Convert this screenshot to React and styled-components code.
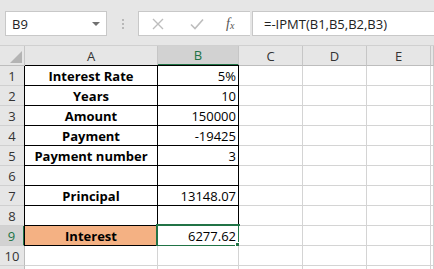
import styled, { createGlobalStyle } from "styled-components";

const Global = createGlobalStyle`
  html, body {
    margin: 0;
    padding: 0;
    background: #ffffff;
    overflow: hidden;
  }
  body {
    font-family: "Open Sans", "Liberation Sans", sans-serif;
  }
`;

const columns = ["A", "B", "C", "D", "E"];

const rows = [
  { label: "Interest Rate", value: "5%" },
  { label: "Years", value: "10" },
  { label: "Amount", value: "150000" },
  { label: "Payment", value: "-19425" },
  { label: "Payment number", value: "3" },
  { label: "", value: "" },
  { label: "Principal", value: "13148.07" },
  { label: "", value: "" },
  { label: "Interest", value: "6277.62", fill: true, selected: true },
];

export default function App() {
  const allRows = [...rows, null, null];

  return (
    <Page>
      <Global />
      <Toolbar>
        <NameBox>
          <span>B9</span>
          <Caret />
        </NameBox>
        <Grip>
          <i />
          <i />
          <i />
        </Grip>
        <ActionBox>
          <svg width="12" height="12" viewBox="0 0 12 12">
            <path d="M1 1 L11 11 M11 1 L1 11" stroke="#bdbdbd" strokeWidth="1.4" />
          </svg>
          <svg width="14" height="12" viewBox="0 0 14 12">
            <path d="M1 6.5 L5 10.5 L13 1.5" stroke="#bdbdbd" strokeWidth="1.6" fill="none" />
          </svg>
          <Fx>
            f<sub>x</sub>
          </Fx>
        </ActionBox>
        <FormulaBox>=-IPMT(B1,B5,B2,B3)</FormulaBox>
      </Toolbar>

      <Sheet>
        <Corner>
          <svg width="12" height="12" viewBox="0 0 12 12">
            <path d="M12 0 L12 12 L0 12 Z" fill="#b4b4b4" />
          </svg>
        </Corner>
        {columns.map((c) => (
          <ColHead key={c} active={c === "B"}>
            {c}
          </ColHead>
        ))}
        <ColHead />

        {allRows.map((r, i) => (
          <Row key={i}>
            {/* the 11th row only peeks in at the bottom edge, its number is hidden */}
            <RowHead active={r && r.selected}>{i < 10 ? i + 1 : ""}</RowHead>
            <Cell boxed={!!r} first={i === 0} left={!!r} fill={r && r.fill}>
              <Label>{r ? r.label : ""}</Label>
            </Cell>
            <Cell boxed={!!r} first={i === 0}>
              <Value>{r ? r.value : ""}</Value>
              {r && r.selected && <Selection />}
            </Cell>
            <Cell />
            <Cell />
            <Cell />
            <Cell />
          </Row>
        ))}
      </Sheet>
    </Page>
  );
}

const Page = styled.div`
  width: 434px;
  height: 269px;
  overflow: hidden;
  background: #ffffff;
`;

const Toolbar = styled.div`
  height: 46px;
  box-sizing: border-box;
  background: #e6e6e6;
  display: flex;
  align-items: center;
  padding: 10px 0 8px 5px;
  border-bottom: 1px solid #d0d0d0;
`;

const NameBox = styled.div`
  box-sizing: border-box;
  width: 102px;
  height: 25px;
  background: #ffffff;
  border: 1px solid #c8c8c8;
  display: flex;
  align-items: center;
  justify-content: space-between;
  padding: 0 6px 0 6px;
  font-size: 13px;
  color: #222;
`;

const Caret = styled.div`
  width: 0;
  height: 0;
  border-left: 4px solid transparent;
  border-right: 4px solid transparent;
  border-top: 4px solid #707070;
`;

const Grip = styled.div`
  width: 31px;
  display: flex;
  flex-direction: column;
  align-items: center;
  gap: 2px;

  i {
    width: 2px;
    height: 2px;
    background: #a8a8a8;
    border-radius: 1px;
  }
`;

const ActionBox = styled.div`
  box-sizing: border-box;
  width: 112px;
  height: 25px;
  background: #ffffff;
  border: 1px solid #c8c8c8;
  border-right: none;
  display: flex;
  align-items: center;
  padding-left: 13px;
  gap: 26px;
`;

const Fx = styled.span`
  font-family: "Liberation Serif", serif;
  font-style: italic;
  font-size: 14px;
  color: #555;
  margin-left: -4px;

  sub {
    font-size: 10px;
    vertical-align: -1px;
  }
`;

const FormulaBox = styled.div`
  box-sizing: border-box;
  flex: 1;
  height: 25px;
  margin-left: 2px;
  background: #ffffff;
  border: 1px solid #c8c8c8;
  border-right: none;
  display: flex;
  align-items: center;
  padding-left: 11px;
  font-size: 13px;
  color: #222;
`;

const Sheet = styled.div`
  display: grid;
  grid-template-columns: 25px 133px 81px 64px 64px 64px 1fr;
  grid-auto-rows: 20px;
  font-size: 13px;
`;

const Row = styled.div`
  display: contents;
`;

const Corner = styled.div`
  box-sizing: border-box;
  background: #e6e6e6;
  border-right: 1px solid #c6c6c6;
  border-bottom: 1px solid #bdbdbd;
  display: flex;
  align-items: flex-end;
  justify-content: flex-end;
  padding: 0 2px 2px 0;
`;

const ColHead = styled.div`
  box-sizing: border-box;
  background: ${(p) => (p.active ? "#d2d2d2" : "#e6e6e6")};
  color: ${(p) => (p.active ? "#217346" : "#333")};
  border-right: 1px solid #c6c6c6;
  border-bottom: ${(p) => (p.active ? "2px solid #217346" : "1px solid #bdbdbd")};
  display: flex;
  align-items: center;
  justify-content: center;
  font-size: 13px;
`;

const RowHead = styled.div`
  box-sizing: border-box;
  background: ${(p) => (p.active ? "#d2d2d2" : "#e6e6e6")};
  color: ${(p) => (p.active ? "#217346" : "#333")};
  border-right: ${(p) => (p.active ? "2px solid #217346" : "1px solid #bdbdbd")};
  border-bottom: 1px solid #d0d0d0;
  display: flex;
  align-items: center;
  justify-content: center;
  font-size: 13px;
`;

const Cell = styled.div`
  position: relative;
  box-sizing: border-box;
  background: ${(p) => (p.fill ? "#f4b183" : "#ffffff")};
  border-right: 1px solid ${(p) => (p.boxed ? "#000" : "#d4d4d4")};
  border-bottom: 1px solid ${(p) => (p.boxed ? "#000" : "#d4d4d4")};
  box-shadow: ${(p) =>
    [p.first && "0 -1px 0 #000", p.left && "-1px 0 0 #000"].filter(Boolean).join(", ") || "none"};
  display: flex;
  align-items: center;
  color: #000;
`;

const Label = styled.span`
  flex: 1;
  text-align: center;
  font-weight: bold;
`;

const Value = styled.span`
  flex: 1;
  text-align: right;
  padding-right: 2px;
`;

const Selection = styled.div`
  position: absolute;
  left: -2px;
  top: -2px;
  right: -2px;
  bottom: -2px;
  border: 2px solid #217346;
  pointer-events: none;

  &::after {
    content: "";
    position: absolute;
    right: -4px;
    bottom: -4px;
    width: 5px;
    height: 5px;
    background: #217346;
    border: 1px solid #ffffff;
  }
`;
